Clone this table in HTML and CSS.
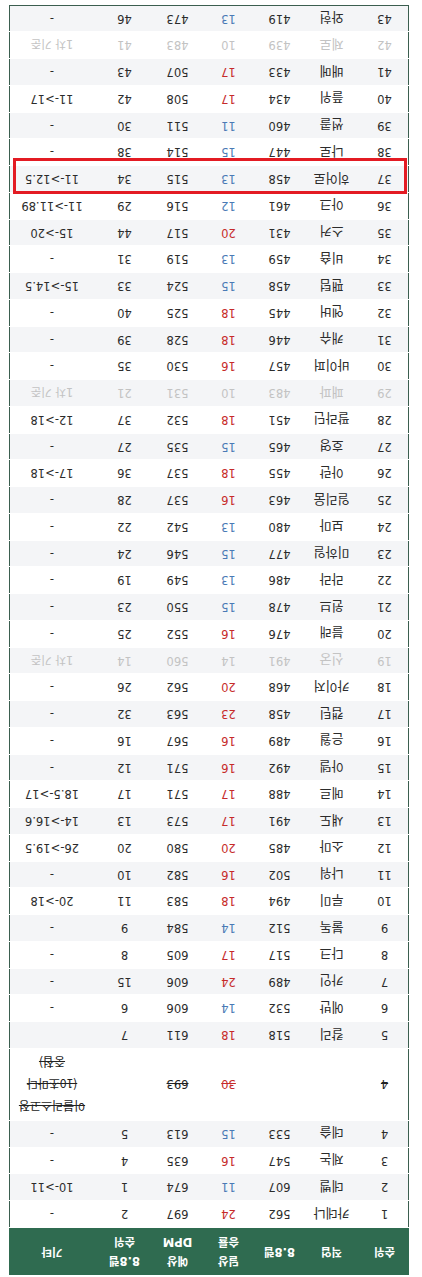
FILE: index.html
```html
<!DOCTYPE html>
<html lang="ko">
<head>
<meta charset="utf-8">
<title>8.8 DPM 순위</title>
<link rel="stylesheet" href="styles.css">
</head>
<body>
<div class="page">
  <div class="table">
    <div class="row head">
      <div>순위</div><div>직업</div><div>8.8렙</div><div>딜상<br>승률</div><div>예상<br>DPM</div><div>8.8렙<br>순위</div><div>기타</div>
    </div>
    <div class="row"><div>1</div><div class="job">카데나</div><div>562</div><div class="up">24</div><div>697</div><div>2</div><div>-</div></div>
    <div class="row"><div>2</div><div class="job">데벨</div><div>607</div><div class="dn">11</div><div>674</div><div>1</div><div>10-&gt;11</div></div>
    <div class="row"><div>3</div><div class="job">제논</div><div>547</div><div class="up">16</div><div>635</div><div>4</div><div>-</div></div>
    <div class="row"><div>4</div><div class="job">데슬</div><div>533</div><div class="dn">15</div><div>613</div><div>5</div><div>-</div></div>
    <div class="row strike"><div class="s">4</div><div></div><div></div><div class="up s">30</div><div class="s">693</div><div></div><div class="note s">이블리스고정<br>(10초마다<br>중첩)</div></div>
    <div class="row"><div>5</div><div class="job">칼리</div><div>518</div><div class="up">18</div><div>611</div><div>7</div><div></div></div>
    <div class="row"><div>6</div><div class="job">에반</div><div>532</div><div class="dn">14</div><div>606</div><div>6</div><div>-</div></div>
    <div class="row"><div>7</div><div class="job">카인</div><div>489</div><div class="up">24</div><div>606</div><div>15</div><div>-</div></div>
    <div class="row"><div>8</div><div class="job">다크</div><div>517</div><div class="up">17</div><div>605</div><div>8</div><div>-</div></div>
    <div class="row"><div>9</div><div class="job">불독</div><div>512</div><div class="dn">14</div><div>584</div><div>9</div><div>-</div></div>
    <div class="row"><div>10</div><div class="job">루미</div><div>494</div><div class="up">18</div><div>583</div><div>11</div><div>20-&gt;18</div></div>
    <div class="row"><div>11</div><div class="job">나워</div><div>502</div><div class="up">16</div><div>582</div><div>10</div><div>-</div></div>
    <div class="row"><div>12</div><div class="job">소마</div><div>485</div><div class="up">20</div><div>580</div><div>20</div><div>26-&gt;19.5</div></div>
    <div class="row"><div>13</div><div class="job">섀도</div><div>491</div><div class="up">17</div><div>573</div><div>13</div><div>14-&gt;16.6</div></div>
    <div class="row"><div>14</div><div class="job">메르</div><div>488</div><div class="up">17</div><div>571</div><div>17</div><div>18.5-&gt;17</div></div>
    <div class="row"><div>15</div><div class="job">아델</div><div>492</div><div class="up">16</div><div>571</div><div>12</div><div>-</div></div>
    <div class="row"><div>16</div><div class="job">은월</div><div>489</div><div class="up">16</div><div>567</div><div>16</div><div>-</div></div>
    <div class="row"><div>17</div><div class="job">캡틴</div><div>458</div><div class="up">23</div><div>563</div><div>32</div><div>-</div></div>
    <div class="row"><div>18</div><div class="job">카이저</div><div>468</div><div class="up">20</div><div>562</div><div>26</div><div>-</div></div>
    <div class="row dim"><div>19</div><div class="job">신궁</div><div>491</div><div>14</div><div>560</div><div>14</div><div>1차 기준</div></div>
    <div class="row"><div>20</div><div class="job">블래</div><div>476</div><div class="up">16</div><div>552</div><div>25</div><div>-</div></div>
    <div class="row"><div>21</div><div class="job">윈브</div><div>478</div><div class="dn">15</div><div>550</div><div>23</div><div>-</div></div>
    <div class="row"><div>22</div><div class="job">라라</div><div>486</div><div class="dn">13</div><div>549</div><div>19</div><div>-</div></div>
    <div class="row"><div>23</div><div class="job">미하일</div><div>477</div><div class="dn">15</div><div>546</div><div>24</div><div>-</div></div>
    <div class="row"><div>24</div><div class="job">보마</div><div>480</div><div class="dn">13</div><div>542</div><div>22</div><div>-</div></div>
    <div class="row"><div>25</div><div class="job">일리움</div><div>463</div><div class="up">16</div><div>537</div><div>28</div><div>-</div></div>
    <div class="row"><div>26</div><div class="job">아란</div><div>455</div><div class="up">18</div><div>537</div><div>36</div><div>17-&gt;18</div></div>
    <div class="row"><div>27</div><div class="job">호영</div><div>465</div><div class="dn">15</div><div>535</div><div>27</div><div>-</div></div>
    <div class="row"><div>28</div><div class="job">팔라딘</div><div>451</div><div class="up">18</div><div>532</div><div>37</div><div>12-&gt;18</div></div>
    <div class="row dim"><div>29</div><div class="job">패파</div><div>483</div><div>10</div><div>531</div><div>21</div><div>1차 기준</div></div>
    <div class="row"><div>30</div><div class="job">바이퍼</div><div>457</div><div class="up">16</div><div>530</div><div>35</div><div>-</div></div>
    <div class="row"><div>31</div><div class="job">캐슈</div><div>446</div><div class="up">18</div><div>528</div><div>39</div><div>-</div></div>
    <div class="row"><div>32</div><div class="job">엔버</div><div>445</div><div class="up">18</div><div>525</div><div>40</div><div>-</div></div>
    <div class="row"><div>33</div><div class="job">팬텀</div><div>458</div><div class="dn">15</div><div>524</div><div>33</div><div>15-&gt;14.5</div></div>
    <div class="row"><div>34</div><div class="job">비숍</div><div>459</div><div class="dn">13</div><div>519</div><div>31</div><div>-</div></div>
    <div class="row"><div>35</div><div class="job">스커</div><div>431</div><div class="up">20</div><div>517</div><div>44</div><div>15-&gt;20</div></div>
    <div class="row"><div>36</div><div class="job">아크</div><div>461</div><div class="dn">12</div><div>516</div><div>29</div><div>11-&gt;11.89</div></div>
    <div class="row hl"><div>37</div><div class="job">히어로</div><div>458</div><div class="dn">13</div><div>515</div><div>34</div><div>11-&gt;12.5</div></div>
    <div class="row"><div>38</div><div class="job">나로</div><div>447</div><div class="dn">15</div><div>514</div><div>38</div><div>-</div></div>
    <div class="row"><div>39</div><div class="job">썬콜</div><div>460</div><div class="dn">11</div><div>511</div><div>30</div><div>-</div></div>
    <div class="row"><div>40</div><div class="job">플위</div><div>434</div><div class="up">17</div><div>508</div><div>42</div><div>11-&gt;17</div></div>
    <div class="row"><div>41</div><div class="job">배메</div><div>433</div><div class="up">17</div><div>507</div><div>43</div><div>-</div></div>
    <div class="row dim"><div>42</div><div class="job">제로</div><div>439</div><div>10</div><div>483</div><div>41</div><div>1차 기준</div></div>
    <div class="row last"><div>43</div><div class="job">와헌</div><div>419</div><div class="dn">13</div><div>473</div><div>46</div><div>-</div></div>
  </div>
</div>
</body>
</html>
```
FILE: styles.css
```css
html, body {
  margin: 0;
  padding: 0;
  background: #ffffff;
  overflow: hidden;
}

.page {
  width: 422px;
  height: 1277px;
  transform: rotate(180deg);
  overflow: hidden;
}

.table {
  margin: 2px 0 0 13px;
  width: 400px;
  display: flex;
  flex-direction: column;
  gap: 1px;
  background: #ffffff;
  font-family: "DejaVu Sans", "Noto Sans CJK KR", sans-serif;
  font-size: 11.5px;
  color: #2b2b2b;
}

.row {
  display: grid;
  grid-template-columns: 47px 59px 45px 57px 45px 61px 84px;
  height: 25.75px;
  align-items: center;
  text-align: center;
  border-left: 1px solid #3b5e4f;
  border-right: 1px solid #3b5e4f;
  background: #ffffff;
}

.row:nth-child(odd) {
  background: #f4f5f7;
}

.row.head {
  height: 47px;
  background: #2f6b50;
  border-color: #2f6b50;
  color: #ffffff;
  font-weight: bold;
  font-size: 11.5px;
  line-height: 19px;
}

.row.last {
  border-bottom: 1px solid #3b5e4f;
}

.job {
  font-family: "Noto Sans CJK KR", sans-serif;
  font-size: 13px;
}

.up {
  color: #c62a2a;
}

.dn {
  color: #4a7ab5;
}

.row.dim,
.row.dim .job {
  color: #c3c3c3;
}

.row.strike {
  height: 71px;
}

.s {
  text-decoration: line-through;
  color: #222222;
}

.s.up {
  color: #c62a2a;
}

.note {
  font-family: "Noto Sans CJK KR", sans-serif;
  font-size: 12px;
  line-height: 22px;
}

.row.hl {
  position: relative;
  z-index: 2;
}

.row.hl::after {
  content: "";
  position: absolute;
  left: 1px;
  right: 3px;
  top: -2px;
  bottom: -8px;
  border: 3px solid #e31b23;
  pointer-events: none;
}
```
